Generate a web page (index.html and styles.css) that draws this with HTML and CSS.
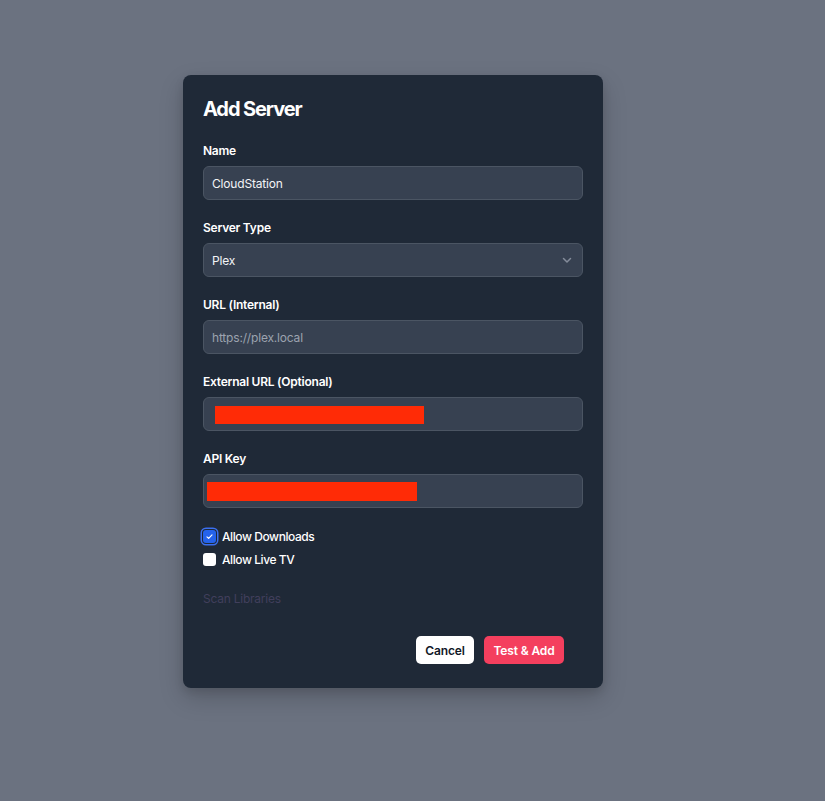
FILE: index.html
```html
<!DOCTYPE html>
<html lang="en">
<head>
<meta charset="utf-8">
<title>Add Server</title>
<link rel="stylesheet" href="styles.css">
</head>
<body>
<div class="overlay">
  <div class="modal">
    <h2 class="title">Add Server</h2>
    <div class="fields">
      <div class="field">
        <label class="label">Name</label>
        <div class="input">CloudStation</div>
      </div>
      <div class="field">
        <label class="label">Server Type</label>
        <div class="input select">
          <span>Plex</span>
          <svg class="chevron" width="20" height="20" viewBox="0 0 20 20" fill="none"><path d="M6.5 8.5l3.5 3.5 3.5-3.5" stroke="#848c9a" stroke-width="1.5" stroke-linecap="round" stroke-linejoin="round"/></svg>
        </div>
      </div>
      <div class="field">
        <label class="label">URL (Internal)</label>
        <div class="input placeholder">https://plex.local</div>
      </div>
      <div class="field">
        <label class="label">External URL (Optional)</label>
        <div class="input redacted-wrap"><span class="redact redact-ext"></span></div>
      </div>
      <div class="field">
        <label class="label">API Key</label>
        <div class="input redacted-wrap"><span class="redact redact-api"></span></div>
      </div>
    </div>
    <div class="checks">
      <label class="check-row">
        <span class="box checked">
          <svg width="9" height="9" viewBox="0 0 16 16" fill="none"><path d="M3.5 8.5l3 3 6-6.5" stroke="#fff" stroke-width="2" stroke-linecap="round" stroke-linejoin="round"/></svg>
        </span>
        <span class="check-text">Allow Downloads</span>
      </label>
      <label class="check-row">
        <span class="box"></span>
        <span class="check-text">Allow Live TV</span>
      </label>
    </div>
    <div class="scan">Scan Libraries</div>
    <div class="actions">
      <button class="btn btn-cancel">Cancel</button>
      <button class="btn btn-primary">Test &amp; Add</button>
    </div>
  </div>
</div>
</body>
</html>
```

FILE: styles.css
```css
* { box-sizing: border-box; }
html, body { margin: 0; padding: 0; }
body {
  background: #6b7280;
  font-family: Inter, "Noto Sans", "Liberation Sans", sans-serif;
  color: #fff;
  width: 825px;
  height: 801px;
  overflow: hidden;
}
.overlay {
  padding-top: 75px;
  padding-left: 183px;
}
.modal {
  width: 420px;
  height: 613px;
  background: #1f2937;
  border-radius: 8px;
  padding: 20px 20px 24px;
  box-shadow: 0 10px 25px rgba(0,0,0,0.18), 0 4px 10px rgba(0,0,0,0.1);
  display: flex;
  flex-direction: column;
}
.title {
  margin: 0 0 20px;
  font-size: 20px;
  line-height: 28px;
  font-weight: 700;
  letter-spacing: -0.055em;
}
.fields {
  display: flex;
  flex-direction: column;
  gap: 20px;
}
.field {
  display: flex;
  flex-direction: column;
}
.label {
  font-size: 12px;
  line-height: 16px;
  font-weight: 600;
  margin-bottom: 7px;
  letter-spacing: -0.02em;
}
.input {
  height: 34px;
  background: #374151;
  border: 1px solid #4b5563;
  border-radius: 6px;
  padding: 0 8px;
  font-size: 12px;
  display: flex;
  align-items: center;
  color: #f3f4f6;
  letter-spacing: -0.015em;
}
.select { justify-content: space-between; padding-right: 5px; }
.chevron { display: block; }
.placeholder { color: #9ca3af; }
.redacted-wrap { position: relative; }
.redact {
  position: absolute;
  background: #ff2b06;
}
.redact-ext { left: 11px; top: 8px; width: 209px; height: 18px; }
.redact-api { left: 3px; top: 7px; width: 210px; height: 19px; }
.checks {
  margin-top: 18px;
  display: flex;
  flex-direction: column;
  gap: 3px;
}
.check-row {
  display: flex;
  align-items: center;
  height: 20px;
  gap: 6px;
}
.box {
  width: 13px;
  height: 13px;
  border-radius: 3px;
  background: #fff;
  display: flex;
  align-items: center;
  justify-content: center;
}
.box.checked {
  background: #2563eb;
  box-shadow: 0 0 0 1px #1f2937, 0 0 0 2.5px #3b6ff0;
}
.check-text {
  font-size: 12px;
  font-weight: 500;
  letter-spacing: -0.035em;
}
.scan {
  margin-top: 22px;
  font-size: 12px;
  line-height: 16px;
  color: #413f5c;
  letter-spacing: -0.02em;
}
.actions {
  margin-top: auto;
  display: flex;
  justify-content: flex-end;
  gap: 10px;
  padding-right: 19px;
}
.btn {
  height: 28px;
  border: none;
  border-radius: 5px;
  font-family: inherit;
  font-size: 12px;
  font-weight: 600;
  padding: 0;
  white-space: nowrap;
  letter-spacing: -0.01em;
}
.btn-cancel { background: #fff; color: #111827; width: 58px; }
.btn-primary { background: #f43f5e; color: #fff; width: 80px; }
```
